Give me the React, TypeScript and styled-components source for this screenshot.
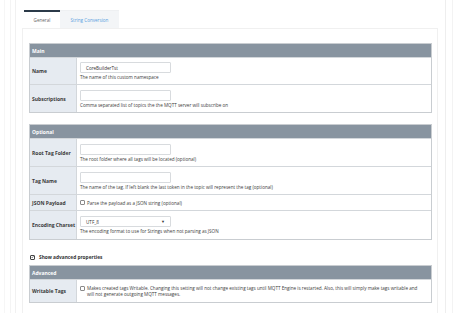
import React from "react";
import styled, { createGlobalStyle } from "styled-components";

const Global = createGlobalStyle`
  html, body { margin: 0; padding: 0; background: #fff; }
  body { font-family: "Open Sans", "Liberation Sans", sans-serif; color: #333; }
`;

const Page = styled.div`
  width: 474px;
  height: 313px;
  overflow: hidden;
  display: flex;
  box-sizing: border-box;
  padding-left: 4px;
`;

const EdgeLine = styled.div<{ $w: number; $c: string }>`
  flex: none;
  width: ${(p) => p.$w}px;
  border-left: 1px solid ${(p) => p.$c};
`;

const Column = styled.div`
  flex: none;
  width: 430px;
  border-left: 1px solid #f1f1f1;
  padding-left: 6px;
  padding-top: 10px;
  box-sizing: border-box;
`;

const TabBar = styled.div`
  display: flex;
  margin-left: 2px;
`;

const Tab = styled.div<{ $active?: boolean }>`
  height: 18px;
  box-sizing: border-box;
  display: flex;
  align-items: center;
  justify-content: center;
  font-size: 4.6px;
  color: ${(p) => (p.$active ? "#666" : "#5aa0e0")};
  background: ${(p) => (p.$active ? "#fff" : "#f3f5f7")};
  border-top: ${(p) => (p.$active ? "2px solid #2b3a48" : "1px solid #eef0f2")};
  width: ${(p) => (p.$active ? 36 : 59)}px;
`;

const Panel = styled.div`
  width: 416px;
  box-sizing: border-box;
  border: 1px solid #f0f0f0;
  padding: 14px 7px 12px 6px;
  display: flex;
  flex-direction: column;
`;

const Table = styled.div<{ $mb?: number }>`
  width: 403px;
  box-sizing: border-box;
  border: 1px solid #c9cdd1;
  margin-bottom: ${(p) => p.$mb ?? 0}px;
`;

const Header = styled.div`
  height: 13px;
  background: #8894a0;
  color: #fff;
  font-weight: 700;
  font-size: 5px;
  display: flex;
  align-items: center;
  padding-left: 2px;
`;

const Row = styled.div<{ $h: number }>`
  display: flex;
  height: ${(p) => p.$h}px;
  border-top: 1px solid #d3d7db;
  box-sizing: border-box;
`;

const Label = styled.div`
  flex: none;
  width: 47px;
  background: #e6ebf1;
  border-right: 1px solid #d3d7db;
  font-weight: 700;
  font-size: 5px;
  color: #3a3a3a;
  display: flex;
  align-items: center;
  padding-left: 2px;
  box-sizing: border-box;
`;

const Cell = styled.div`
  flex: 1;
  display: flex;
  flex-direction: column;
  justify-content: center;
  padding: 0 8px 0 3px;
  font-size: 4.6px;
  color: #3c3c3c;
  gap: 1px;
`;

const Input = styled.div`
  width: 91px;
  height: 11px;
  box-sizing: border-box;
  border: 1px solid #d8dbde;
  border-radius: 1px;
  font-size: 4.6px;
  color: #333;
  display: flex;
  align-items: center;
  padding: 0 5px;
  justify-content: space-between;
`;

const Help = styled.div`
  line-height: 6px;
`;

const CheckLine = styled.div`
  display: flex;
  align-items: flex-start;
  gap: 2px;
  line-height: 6px;
`;

const Box = styled.span<{ $checked?: boolean }>`
  flex: none;
  width: 5px;
  height: 5px;
  box-sizing: border-box;
  border: 0.7px solid ${(p) => (p.$checked ? "#444" : "#8a8a8a")};
  border-radius: 1px;
  margin-top: 0.5px;
  display: flex;
  align-items: center;
  justify-content: center;
  background: #fff;
`;

const Advanced = styled.div`
  display: flex;
  align-items: center;
  gap: 4px;
  font-size: 4.8px;
  font-weight: 700;
  color: #333;
  line-height: 6px;
  padding: 14px 0 5px 1px;
`;

const Footer = styled.div`
  display: flex;
  padding-left: 177px;
  padding-top: 10px;
`;

const Button = styled.div`
  width: 49px;
  height: 10px;
  background: #2a8be0;
  border-radius: 1px;
`;

const Check = () => (
  <svg width="4" height="4" viewBox="0 0 10 10">
    <path d="M1.5 5.2 L4 7.8 L8.6 2.2" stroke="#333" strokeWidth="1.8" fill="none" />
  </svg>
);

export default function App() {
  return (
    <>
      <Global />
      <Page>
        <EdgeLine $w={5} $c="#f6f6f6" />
        <EdgeLine $w={4} $c="#f4f4f4" />
        <Column>
          <TabBar>
            <Tab $active>General</Tab>
            <Tab>String Conversion</Tab>
          </TabBar>
          <Panel>
            <Table $mb={11}>
              <Header>Main</Header>
              <Row $h={27}>
                <Label>Name</Label>
                <Cell>
                  <Input>CoreBuilderTst</Input>
                  <Help>The name of this custom namespace</Help>
                </Cell>
              </Row>
              <Row $h={28}>
                <Label>Subscriptions</Label>
                <Cell>
                  <Input />
                  <Help>Comma separated list of topics the the MQTT server will subscribe on</Help>
                </Cell>
              </Row>
            </Table>
            <Table>
              <Header>Optional</Header>
              <Row $h={28}>
                <Label>Root Tag Folder</Label>
                <Cell>
                  <Input />
                  <Help>The root folder where all tags will be located (optional)</Help>
                </Cell>
              </Row>
              <Row $h={28}>
                <Label>Tag Name</Label>
                <Cell>
                  <Input />
                  <Help>The name of the tag. If left blank the last token in the topic will represent the tag (optional)</Help>
                </Cell>
              </Row>
              <Row $h={16}>
                <Label>JSON Payload</Label>
                <Cell>
                  <CheckLine>
                    <Box />
                    <span>Parse the payload as a JSON string (optional)</span>
                  </CheckLine>
                </Cell>
              </Row>
              <Row $h={29}>
                <Label>Encoding Charset</Label>
                <Cell>
                  <Input>
                    <span>UTF_8</span>
                    <span style={{ fontSize: "4px" }}>▼</span>
                  </Input>
                  <Help>The encoding format to use for Strings when not parsing as JSON</Help>
                </Cell>
              </Row>
            </Table>
            <Advanced>
              <Box $checked>
                <Check />
              </Box>
              <span>Show advanced properties</span>
            </Advanced>
            <Table>
              <Header>Advanced</Header>
              <Row $h={23}>
                <Label>Writable Tags</Label>
                <Cell>
                  <CheckLine>
                    <Box />
                    <span>
                      Makes created tags Writable. Changing this setting will not change existing tags until MQTT Engine is restarted. Also, this will simply make tags writable and will not generate outgoing MQTT messages.
                    </span>
                  </CheckLine>
                </Cell>
              </Row>
            </Table>
            <Footer>
              <Button />
            </Footer>
          </Panel>
        </Column>
        <EdgeLine $w={6} $c="#eeeeee" />
        <EdgeLine $w={20} $c="#f3f3f3" />
      </Page>
    </>
  );
}
